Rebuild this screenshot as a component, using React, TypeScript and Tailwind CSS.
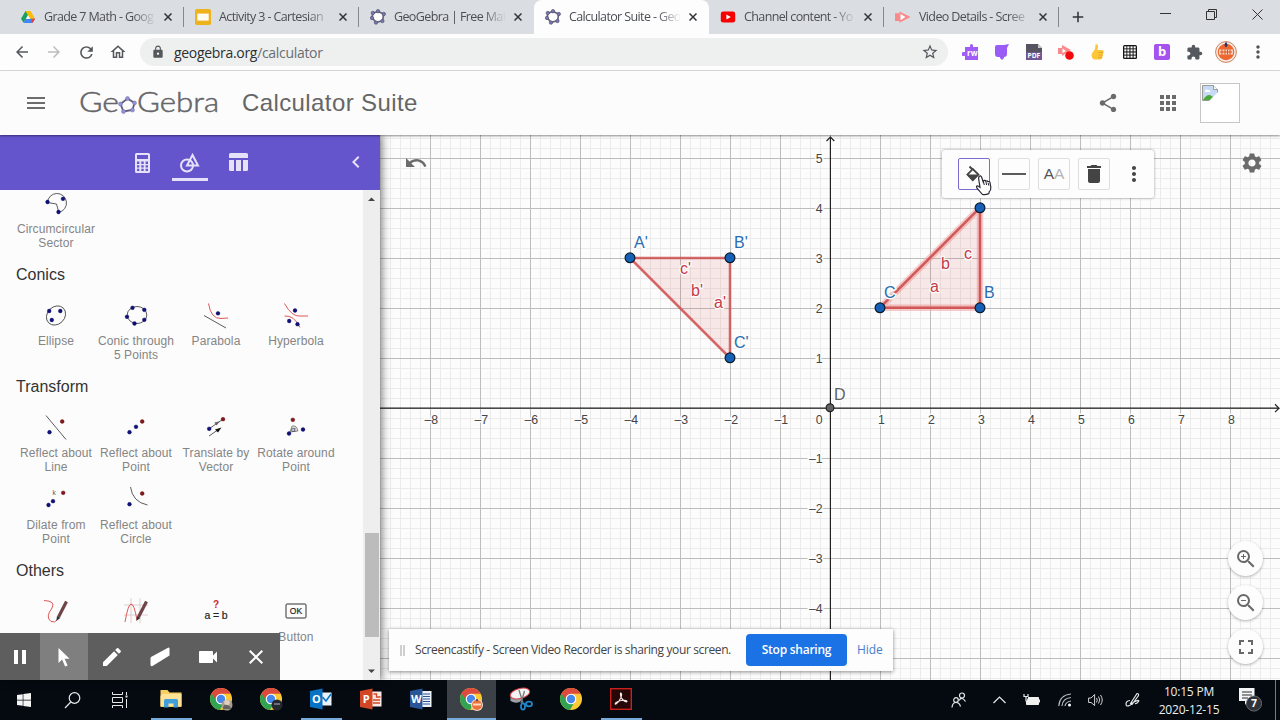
import type { ReactNode } from 'react'
import {
    MdAdd, MdApps, MdArrowBack, MdArrowForward, MdChevronLeft, MdClose, MdDelete, MdExtension,
    MdFullscreen, MdLock, MdMenu, MdModeEdit, MdMoreVert, MdOutlineHome, MdPause,
    MdRefresh, MdSettings, MdShare, MdStarBorder, MdUndo, MdVideocam, MdZoomIn, MdZoomOut,
} from 'react-icons/md'
import { FaWindows } from 'react-icons/fa'

/* ---------- shared icons ---------- */

const GeoIcon = () => (
    <svg className="w-4 h-4" viewBox="0 0 16 16">
        <path d="M8 2.4 13.6 5 12.6 11.8 6 13.4 2 8.6 3 4.2Z" fill="#fff" stroke="#66667c" strokeWidth="1.7" />
        {[[8, 2.2], [13.8, 5], [12.4, 12], [6, 13.6], [2, 9], [2.8, 4]].map(([x, y]) => (
            <circle key={x} cx={x} cy={y} r="1.7" fill="#7876b4" stroke="#55556d" strokeWidth=".7" />
        ))}
    </svg>
)

const DriveIcon = () => (
    <svg className="w-4 h-4" viewBox="0 0 16 16">
        <path d="M5.5 2h5l-3.8 6.4L3.5 13.8 1 9.8Z" fill="#19a15f" />
        <path d="M5.5 2h5L15 9.7h-5Z" fill="#fbbc04" />
        <path d="M5.4 9.7H15l-2.4 4.2h-9Z" fill="#4285f4" />
        <path d="M11 9.7h4l-2.4 4.2Z" fill="#ea4335" />
        <path d="M8 6.2l2 3.5H6Z" fill="#fff" />
    </svg>
)

const SlidesIcon = () => (
    <svg className="w-4 h-4" viewBox="0 0 16 16">
        <rect width="16" height="16" rx="1.8" fill="#edb21c" />
        <rect x="2.3" y="4.6" width="11.4" height="7" fill="#fffdf2" />
    </svg>
)

const YoutubeIcon = () => (
    <svg className="w-4 h-4" viewBox="0 0 16 16">
        <rect x=".8" y="2.6" width="14.4" height="11" rx="2.4" fill="#f80000" />
        <path d="M6.4 5.6v5L10.8 8Z" fill="#fff" />
    </svg>
)

const CastifyIcon = () => (
    <svg className="w-4 h-4" viewBox="0 0 16 16">
        <path d="M0 4.2h4.5V2.4L15.6 8 4.5 13.8V12H0Z" fill="#f98a8c" />
        <path d="M5.5 5l5 3-5 3.2Z" fill="#fff" />
    </svg>
)

const ChromeIcon = ({ children }: { children?: ReactNode }) => (
    <svg className="w-6 h-6" viewBox="0 0 24 24">
        <circle cx="12" cy="12" r="11" fill="#fcc934" />
        <path d="M12 12 2.5 6.5A11 11 0 0 0 11 23l5-9Z" fill="#32a350" />
        <path d="M12 12H6.5L2.5 6.5A11 11 0 0 1 21.6 6.8H12Z" fill="#dd4b3e" />
        <circle cx="12" cy="12" r="5.3" fill="#fff" />
        <circle cx="12" cy="12" r="4.2" fill="#4688ec" />
        {children}
    </svg>
)

/* ---------- browser chrome ---------- */

interface TabProps {
    icon: ReactNode;
    title: string;
    active?: boolean;
    line?: boolean;
}

const Tab = ({ icon, title, active, line }: TabProps) => (
    <div className={`flex items-center w-[175px] h-full pl-[11px] shrink-0 ${active ? 'bg-[#fdfdfd] rounded-t-lg' : ''}`}>
        {icon}
        <div className="w-[111px] ml-2 whitespace-nowrap text-[12.5px] tracking-[-0.62px] text-[#4c4f54] font-['Open_Sans',sans-serif] [mask-image:linear-gradient(to_right,#000_80%,transparent_101%)]">
            {title}
        </div>
        <div className="w-[26px] flex justify-center">
            <svg className="w-2 h-2" viewBox="0 0 8 8"><path d="M.5.5l7 7m0-7l-7 7" stroke="#303338" strokeWidth="1.5" /></svg>
        </div>
        {line && <div className="ml-[2px] w-px h-5 bg-[#85888d]" />}
    </div>
)

const TabStrip = () => (
    <div className="flex items-center h-[34px] pl-[9px] bg-[#dadde2]">
        <Tab icon={<DriveIcon />} title="Grade 7 Math - Goog" line />
        <Tab icon={<SlidesIcon />} title="Activity 3 - Cartesian" line />
        <Tab icon={<GeoIcon />} title="GeoGebra | Free Mat" />
        <Tab icon={<GeoIcon />} title="Calculator Suite - Geo" active />
        <Tab icon={<YoutubeIcon />} title="Channel content - Yo" line />
        <Tab icon={<CastifyIcon />} title="Video Details - Scree" line />
        <MdAdd className="ml-[10px] w-[18px] h-[18px] text-[#2f3337]" />
        <div className="ml-auto flex items-start h-full pt-[9px] pr-[17px] gap-[35px]">
            <svg className="w-[11px] h-[11px]" viewBox="0 0 11 11"><path d="M0 4.5h11" stroke="#333" /></svg>
            <svg className="w-[11px] h-[11px]" viewBox="0 0 11 11">
                <path d="M.5 2.5h8v8h-8ZM2.5 2.5v-2h8v8h-2" fill="none" stroke="#333" />
            </svg>
            <svg className="w-[11px] h-[11px]" viewBox="0 0 11 11"><path d="M.5.5l10 10m0-10l-10 10" stroke="#333" /></svg>
        </div>
    </div>
)

const extensions: ReactNode[] = [
    <svg className="w-4 h-4" viewBox="0 0 16 16">
        <path d="M2 3h6V1.5a1.5 1.5 0 0 1 3 0V3h5v13H3v-4H1.500a1.500 1.500 0 0 1 0-4H3V3Z" fill="#a15cf6" />
        <text x="5" y="12" fontSize="8" fontWeight="700" fill="#fff" fontFamily="Open Sans">rw</text>
    </svg>,
    <svg className="w-4 h-4" viewBox="0 0 16 16">
        <path d="M3 1h7l5-1-2 4v6q0 3-3 3v1l-2 2-2-2v-1H4q-3 0-3-3V3q0-2 2-2Z" fill="#9a5cf7" />
    </svg>,
    <svg className="w-4 h-4" viewBox="0 0 16 16">
        <path d="M0 0h12l4 4v12H0Z" fill="#55535f" />
        <path d="M0 8h16v8H0Z" fill="#6e5794" />
        <path d="M12 0v4h4Z" fill="#c9c9cf" />
        <text x="1.600" y="13.800" fontSize="6.600" fontWeight="700" fill="#fff" fontFamily="Open Sans">PDF</text>
    </svg>,
    <svg className="w-4 h-4" viewBox="0 0 16 16">
        <path d="M0 4h4V1l9 5-9 6v-2H0Z" fill="#f98a8c" />
        <path d="M4.500 4.500 8 7l-3.500 2Z" fill="#fff" />
        <circle cx="11.500" cy="11.500" r="4.300" fill="#f3080c" />
    </svg>,
    <svg className="w-4 h-4" viewBox="0 0 16 16">
        <path d="M5.500.5c2-.8 2.800 1 2.400 3l-.5 2.500h4.800q1.800.4 1.300 2.200l-1.200 5.200Q12 15.500 10 15.500H4Q1.500 14 1.500 11.500 1.500 9 3.300 7.500 5.500 5.500 5.500.5Z" fill="#fbc638" />
        <path d="M8.500 8.500h4.800M8.500 11h4.300M8 13.400h4.200" stroke="#dd9b24" strokeWidth=".7" />
    </svg>,
    <svg className="w-4 h-4" viewBox="0 0 16 16">
        <rect x="1" y="1" width="14" height="14" rx="1.500" fill="#161616" />
        {[2.3, 5.3, 8.5, 11.6].map(x => [2.3, 5.3, 8.5, 11.6].map(y => (
            <rect key={`${x}-${y}`} x={x} y={y} width="2.100" height="2.100" fill="#fff" />
        )))}
    </svg>,
    <div className="w-4 h-4 rounded-[2px] bg-[#a552ef] text-white text-[13px] leading-[15px] font-bold text-center font-['Open_Sans',sans-serif]">b</div>,
    <MdExtension className="w-[17px] h-[17px] text-[#55585c]" />,
    <svg className="w-[22px] h-[22px]" viewBox="0 0 22 22">
        <circle cx="11" cy="11" r="10.400" fill="#f6ede6" stroke="#c0603a" strokeWidth=".8" />
        <circle cx="11" cy="11" r="8.300" fill="#ee6730" />
        <path d="M4 8.500h14v5H4Z" fill="#fbd3bd" />
        <path d="M5 11h12M7 8.500v5M10 8.500v5M12.500 8.500v5M15 8.500v5" stroke="#d9531f" strokeWidth="1" />
        <path d="M11 .8q3 4 0 5.500-3-1.500 0-5.500Z" fill="#27376b" />
    </svg>,
    <MdMoreVert className="w-5 h-5 text-[#505357]" />,
]

const AddressBar = () => (
    <div className="flex items-center h-[37px] pl-1.5 bg-[#fdfdfd] border-b border-[#dcdcdc]">
        {[
            <MdArrowBack className="w-[18px] h-[18px] text-[#54575b]" />,
            <MdArrowForward className="w-[18px] h-[18px] text-[#bdbdbe]" />,
            <MdRefresh className="w-[19px] h-[19px] text-[#54575b]" />,
            <MdOutlineHome className="w-[18px] h-[18px] text-[#54575b]" />,
        ].map((icon, i) => <div key={i} className="w-8 flex justify-center">{icon}</div>)}
        <div className="flex items-center ml-[6px] w-[808px] h-7 rounded-full bg-[#eef0f0] pl-[11px] pr-[9px]">
            <MdLock className="w-[14px] h-[14px] text-[#54575b]" />
            <div className="ml-[9px] text-[14px] tracking-[-0.31px] text-[#696d71] font-['Open_Sans',sans-serif]">
                <span className="text-[#2c2e31]">geogebra.org</span>/calculator
            </div>
            <MdStarBorder className="ml-auto w-[18px] h-[18px] text-[#54575b]" />
        </div>
        <div className="flex ml-[6px]">
            {extensions.map((icon, i) => <div key={i} className="w-8 h-8 flex items-center justify-center">{icon}</div>)}
        </div>
    </div>
)

const AppHeader = () => (
    <div className="relative z-10 flex items-center h-16 bg-[#fcfcfc] shadow-[0_1px_2px_rgba(0,0,0,0.45)]">
        <MdMenu className="ml-6 w-6 h-6 text-[#6d6d6d]" />
        <svg className="ml-8 w-[140px] h-8" viewBox="0 0 140 32">
            <g fill="#66666a" fontFamily="Lato" fontSize="26.500" fontWeight="300" stroke="#66666a" strokeWidth=".5">
                <text x="-1" y="25" textLength="40" lengthAdjust="spacingAndGlyphs">Ge</text>
                <text x="57" y="25" textLength="82" lengthAdjust="spacingAndGlyphs">Gebra</text>
            </g>
            <path d="M47.500 11.500 54.500 16 52.500 23 43.500 24.500 40.500 17Z" fill="none" stroke="#5c5c78" strokeWidth="1.800" />
            {[[47.5, 11.5], [54.5, 16], [52.5, 23], [43.5, 24.5], [40.5, 17]].map(([x, y]) => (
                <circle key={x} cx={x} cy={y} r="2" fill="#9390e0" stroke="#706ea0" strokeWidth=".5" />
            ))}
        </svg>
        <div className="ml-[22px] text-2xl tracking-[0.4px] text-[#666]">Calculator Suite</div>
        <div className="ml-auto flex items-center pr-10">
            <MdShare className="w-[22px] h-[22px] text-[#6b6b6b]" />
            <MdApps className="ml-[37px] w-6 h-6 text-[#6b6b6b]" />
            <div className="ml-5 -mt-px w-10 h-10 border border-[#c6c6c6] bg-white p-px">
                <svg className="w-4 h-4" viewBox="0 0 16 16">
                    <path d="M.5.5h11l4 4v11H.500Z" fill="#c7daf4" stroke="#9a9a9a" />
                    <path d="M1 15q5-8 10-3l-2 3Z" fill="#4caa38" />
                    <path d="M3 6q1-3 3-1 3 0 2 2H3Z" fill="#fff" />
                    <path d="M16 7 7 16h9Z" fill="#fff" />
                    <path d="M11.500.5v4h4" fill="#fff" stroke="#9a9a9a" />
                </svg>
            </div>
        </div>
    </div>
)

/* ---------- tools panel ---------- */

const Dot = ({ x, y, red }: { x: number; y: number; red?: boolean }) => (
    <circle cx={x} cy={y} r="1.900" fill={red ? '#8c1418' : '#10107c'} stroke={red ? '#4d0b0e' : '#06065a'} strokeWidth=".4" />
)

const toolLine = { fill: 'none', stroke: '#4a4a4a', strokeWidth: 0.9 }
const redLine = { fill: 'none', stroke: '#dc4545', strokeWidth: 0.9 }

interface Tool {
    label: string;
    art: ReactNode;
}

// every drawing sits in a 32x32 box
const circumSector: Tool = {
    label: 'Circumcircular Sector',
    art: <><path d="M7.500 15.500A9.500 9.500 0 1 1 18.800 25.300L16.500 17Z" {...toolLine} /><Dot x={7.5} y={15} /><Dot x={23} y={11.8} /><Dot x={18.5} y={25} /></>,
}

const conics: Tool[] = [
    { label: 'Ellipse', art: <><ellipse cx="16" cy="16.500" rx="10.400" ry="8.700" transform="rotate(-45 16 16.500)" {...toolLine} /><Dot x={9.2} y={12} /><Dot x={20.3} y={12} /><Dot x={11.8} y={21} /></> },
    { label: 'Conic through 5 Points', art: <><ellipse cx="17" cy="16" rx="9.800" ry="8.500" {...toolLine} /><Dot x={12.5} y={8.8} /><Dot x={24.3} y={10.8} /><Dot x={7} y={17.8} /><Dot x={24.3} y={20.8} /><Dot x={14.5} y={24.5} /></> },
    { label: 'Parabola', art: <><path d="M8.500 4.500Q11 20 21 19.500L28 19" {...redLine} /><path d="M4 16.500 26 29" {...toolLine} /><Dot x={18} y={14.3} /></> },
    { label: 'Hyperbola', art: <><path d="M4.500 4.500Q12 18 20 17L28 17M4.500 17Q14 16 20 28.500" {...redLine} /><Dot x={15} y={11.5} /><Dot x={9.2} y={22} /><Dot x={17.5} y={25.2} /></> },
]

const transforms: Tool[] = [
    { label: 'Reflect about Line', art: <><path d="M6 4.500 26 28.500" {...toolLine} /><Dot x={22.2} y={10.5} red /><Dot x={9.5} y={21.2} /></> },
    { label: 'Reflect about Point', art: <><Dot x={22.2} y={10.5} red /><Dot x={16} y={15.8} /><Dot x={9.5} y={21.2} /></> },
    { label: 'Translate by Vector', art: <><path d="M9.500 17.500 22.500 8.500M9 25l8-5.500" {...toolLine} /><path d="M20 10.200l-3.500 4.200-2.200-2.800Z" fill="#666" /><path d="M21.500 16.500l-3.500 5-3-3Z" fill="#111" /><Dot x={23} y={8.2} red /><Dot x={9.2} y={17.8} /></> },
    { label: 'Rotate around Point', art: <><path d="M10 21 12 15q5-1 6 5Z" fill="#d6d6d6" stroke="#777" strokeWidth=".8" /><text x="11" y="20.500" fontSize="8" fill="#444">α</text><Dot x={12.8} y={8.8} red /><Dot x={9} y={22.5} /><Dot x={23} y={18.5} /></> },
    { label: 'Dilate from Point', art: <><text x="12.500" y="12" fontSize="6.500" fill="#555">k</text><Dot x={23.2} y={9.8} red /><Dot x={13} y={18.2} /><Dot x={8.5} y={22} /></> },
    { label: 'Reflect about Circle', art: <><path d="M10.500 4Q12.500 19 27.500 22" {...toolLine} /><Dot x={22.2} y={10.5} red /><Dot x={9.5} y={21.2} /></> },
]

const pencil = <><path d="M26.500 6.500 18.500 22" stroke="#6f4447" strokeWidth="3.200" /><path d="M17 21l-.7 5 4-3Z" fill="#333" /></>

// the recorder bar covers the names of the first three
const others: Tool[] = [
    { label: '', art: <><path d="M4 5.500Q16 6 12 13 5 22 11 26.500 15 28 17 25" {...redLine} />{pencil}</> },
    { label: '', art: <><path d="M11 3v25M20 3v25M4 10h24M4 20h24" stroke="#d8c4c4" strokeWidth=".8" /><path d="M5 27Q11-8 17 25" {...redLine} />{pencil}</> },
    { label: '', art: <><text x="16" y="13" fontSize="10" fontWeight="700" textAnchor="middle" fill="#d02a2a">?</text><text x="16" y="24" fontSize="10.500" textAnchor="middle" textLength="23" fill="#222" stroke="#222" strokeWidth=".2">a = b</text></> },
    { label: 'Button', art: <><rect x="6" y="9" width="20" height="14" rx="1" fill="none" stroke="#333" /><text x="16" y="19" fontSize="8.500" textAnchor="middle" fill="#222" stroke="#222" strokeWidth=".2">OK</text></> },
]

const ToolRow = ({ tools }: { tools: Tool[] }) => (
    <div className="grid grid-cols-[repeat(4,80px)]">
        {tools.map((tool, i) => (
            <div key={i} className="flex flex-col items-center h-[72px]">
                <div className="h-10 flex items-center pt-px">
                    <svg className="w-8 h-8 overflow-visible" viewBox="0 0 32 32">{tool.art}</svg>
                </div>
                <div className="w-20 text-center text-xs leading-[14px] tracking-[0.1px] text-[#858585]">{tool.label}</div>
            </div>
        ))}
    </div>
)

const SectionTitle = ({ children }: { children: ReactNode }) => (
    <div className="h-10 leading-[42px] text-base text-[#333]">{children}</div>
)

const ToolsPanel = () => (
    <div className="relative z-[5] flex flex-col w-[380px] h-full bg-[#fcfcfc] shadow-[2px_0_8px_rgba(0,0,0,0.5)]">
        <div className="flex h-[55px] bg-[#6455cd] shrink-0">
            <div className="flex ml-[118px]">
                <div className="w-12 h-full flex justify-center pt-[18px]">
                    <svg className="w-[15px] h-5" viewBox="0 0 15 20">
                        <path fillRule="evenodd" fill="#e5e1f8" d="M1.500 0h12Q15 0 15 1.500v17q0 1.500-1.500 1.500h-12Q0 20 0 18.500v-17Q0 0 1.500 0ZM2 2v4h11V2ZM2 8.500V11h2.300V8.500Zm4.300 0V11h2.400V8.500Zm4.300 0V11H13V8.500ZM2 12.200v2.300h2.300v-2.300Zm4.300 0v2.300h2.400v-2.300Zm4.300 0v2.300H13v-2.300ZM2 15.800V18h2.300v-2.200Zm4.300 0V18h2.400v-2.200Zm4.300 0V18H13v-2.200Z" />
                    </svg>
                </div>
                <div className="w-12 h-full flex flex-col items-center pt-[18px]">
                    <svg className="w-5 h-5" viewBox="0 0 20 20">
                        <g fill="none" stroke="#e5e1f8" strokeWidth="2">
                            <circle cx="7" cy="12.500" r="6" />
                            <path d="M12.500 2 18 12.500H7Z" />
                        </g>
                    </svg>
                    <div className="mt-[5px] w-9 h-[3px] bg-[#e5e1f8]" />
                </div>
                <div className="w-[49px] h-full flex justify-center pt-[17px]">
                    <svg className="w-[19px] h-5" viewBox="0 0 19 20">
                        <path fill="#e5e1f8" d="M1.500 1h16Q19 1 19 2.500V6H0V2.500Q0 1 1.500 1ZM0 8h5v11H1.500Q0 19 0 17.500ZM7 8h5v11H7ZM14 8h5v9.500q0 1.500-1.500 1.500H14Z" />
                    </svg>
                </div>
            </div>
            <MdChevronLeft className="ml-auto mr-3 mt-[15px] w-6 h-6 text-[#e5e1f8]" />
        </div>
        <div className="flex flex-1 min-h-0">
            <div className="flex-1 overflow-hidden pl-4">
                <div className="-mt-2">
                    <ToolRow tools={[circumSector]} />
                    <SectionTitle>Conics</SectionTitle>
                    <ToolRow tools={conics} />
                    <SectionTitle>Transform</SectionTitle>
                    <ToolRow tools={transforms} />
                    <SectionTitle>Others</SectionTitle>
                    <ToolRow tools={others} />
                </div>
            </div>
            <div className="flex flex-col items-center w-[17px] bg-[#eeeeee] pt-[7px] pb-[5px]">
                <svg className="w-[7px] h-4" viewBox="0 0 7 16"><path d="M0 4 3.500.5 7 4Z" fill="#444" /></svg>
                <div className="flex-1 flex flex-col justify-end w-full pl-[2px] pr-px">
                    <div className="h-[104px] mb-[29px] bg-[#bcbcbc]" />
                </div>
                <svg className="w-[7px] h-[9px]" viewBox="0 0 7 9"><path d="M0 3.500 3.500 7 7 3.500Z" fill="#444" /></svg>
            </div>
        </div>
    </div>
)

/* ---------- graphics view ---------- */

const OX = 830.5
const OY = 408.5
const UNIT = 50

const range = (from: number, to: number) => Array.from({ length: to - from + 1 }, (_, i) => from + i)

const points = [
    { x: 630, y: 258, label: "A'" },
    { x: 730, y: 258, label: "B'" },
    { x: 730, y: 358, label: "C'" },
    { x: 980, y: 208, label: '' },
    { x: 980, y: 308, label: 'B' },
    { x: 880, y: 308, label: 'C' },
]

const sides = [
    { x: 680, y: 274, label: "c'" },
    { x: 691, y: 296, label: "b'" },
    { x: 714, y: 308, label: "a'" },
    { x: 964, y: 258.5, label: 'c' },
    { x: 941, y: 269, label: 'b' },
    { x: 930, y: 292, label: 'a' },
]

const halo = { stroke: '#fcfcfc', strokeWidth: 3, paintOrder: 'stroke' as const }

const Graph = () => (
    <svg className="w-[900px] h-[545px]" viewBox="380 135 900 545" fontFamily="Liberation Sans, sans-serif">
        <rect x="380" y="135" width="900" height="545" fill="#fcfcfc" />
        <g stroke="#ebebeb">
            {range(-45, 45).map(i => <path key={`v${i}`} d={`M${OX + i * 10} 135V680`} />)}
            {range(-27, 27).map(i => <path key={`h${i}`} d={`M380 ${OY + i * 10}H1280`} />)}
        </g>
        <g stroke="#bdbdbd">
            {range(-8, 8).map(i => <path key={`v${i}`} d={`M${OX + i * UNIT} 135V680`} />)}
            {range(-5, 5).map(i => <path key={`h${i}`} d={`M380 ${OY + i * UNIT}H1280`} />)}
        </g>
        <g fill="none" stroke="#222" strokeWidth="1.200">
            <path d="M380 408.200H1279M830.400 137V680" />
            <path d="M826.500 141l3.900-4 3.900 4M1275 404.300l4 3.900-4 3.900" />
        </g>

        <g fill="#444" fontSize="12.300" {...halo}>
            {range(-8, 8).filter(i => i !== 0).map(i => (
                <text key={i} x={OX + i * UNIT + 0.8} y="424.300" textAnchor="middle">{i < 0 ? `–${-i}` : i}</text>
            ))}
            {range(-4, 5).filter(i => i !== 0).map(i => (
                <text key={i} x="822.600" y={OY - i * UNIT + 4.3} textAnchor="end">{i < 0 ? `–${-i}` : i}</text>
            ))}
            <text x="822.500" y="424.300" textAnchor="end">0</text>
        </g>

        <g strokeLinejoin="round">
            <path d="M630 258H730V358Z" fill="#d32f2f" fillOpacity=".1" stroke="#cf4f4f" strokeOpacity=".85" strokeWidth="2.500" />
            <path d="M980 207.700V307.700H880Z" fill="none" stroke="#f0a0a0" strokeOpacity=".55" strokeWidth="6.500" />
            <path d="M980 207.700V307.700H880Z" fill="#d32f2f" fillOpacity=".1" stroke="#cc4c4c" strokeOpacity=".9" strokeWidth="2.500" />
        </g>
        <g fontSize="16" fill="#c43a46" {...halo} strokeWidth="2.500">
            {sides.map(s => <text key={s.label} x={s.x} y={s.y}>{s.label}</text>)}
        </g>
        <g fontSize="16" fill="#2a6cb0" {...halo}>
            {points.filter(p => p.label).map(p => <text key={p.label} x={p.x + 4} y={p.y - 10}>{p.label}</text>)}
            <text x="834" y="400" fill="#616161">D</text>
        </g>
        {points.map(p => (
            <circle key={p.x + p.label} cx={p.x} cy={p.y - 0.2} r="4.900" fill="#1561b8" stroke="#0c1c2c" strokeWidth="1.200" />
        ))}
        <circle cx="830" cy="407.800" r="3.900" fill="#616161" stroke="#222" strokeWidth="1.200" />
    </svg>
)

const StyleBar = () => (
    <div className="absolute left-[562px] top-[15px] flex items-center w-[212px] h-12 pl-4 gap-2 rounded-[3px] bg-[#fdfdfd] shadow-[0_0_3px_rgba(0,0,0,0.4)]">
        <div className="w-8 h-8 flex items-center justify-center border border-[#7c6cd0] rounded-[2px]">
            <svg className="w-[18px] h-[18px]" viewBox="0 0 18 18">
                <path d="M4.500 1.500 8 5" stroke="#444" strokeWidth="2" />
                <path d="M7.800 4 2.400 9.600l5.400 5.600 5.600-5.600Z" fill="#fff" stroke="#444" strokeWidth="1.800" />
                <path d="M1.800 9.500h12.200L7.800 16Z" fill="#444" />
            </svg>
        </div>
        <div className="w-8 h-8 flex items-center justify-center border border-[#dedede] rounded-[2px]">
            <div className="w-6 h-[2px] bg-[#5c5c5c]" />
        </div>
        <div className="w-8 h-8 flex items-center justify-center border border-[#dedede] rounded-[2px] text-[15.5px] text-[#555]">
            A<span className="text-[#b4b4b4]">A</span>
        </div>
        <div className="w-8 h-8 flex items-center justify-center border border-[#dedede] rounded-[2px]">
            <MdDelete className="w-6 h-6 text-[#444]" />
        </div>
        <div className="w-8 h-8 flex items-center justify-center">
            <MdMoreVert className="w-6 h-6 text-[#444]" />
        </div>
        {/* mouse pointer */}
        <svg className="absolute left-[31px] top-[24px] w-[20px] h-[22px]" viewBox="0 0 20 22">
            <path d="M6 2.500q1.500-1.500 2.600.5l1.600 5 .6-1.400q1.500-.6 2 .6 1.400-.8 2.200.5 1.600-.7 2 .9l.8 4.500q.3 3-1.500 4.500l-.5 2q-3.500 1.500-6.500.7L4.200 14.500q-1.800-3 .8-2.500l2 1.200L5.600 4.500Z" fill="#fff" stroke="#2a2a35" strokeWidth="1.200" />
            <path d="M10.500 8l.8 3M13 8l.6 3M15.200 9l.5 2.500" stroke="#2a2a35" />
        </svg>
    </div>
)

const RoundButton = ({ children }: { children: ReactNode }) => (
    <div className="w-[35px] h-[35px] rounded-full bg-[#fdfdfd] flex items-center justify-center text-[#696969] shadow-[0_1px_3px_rgba(0,0,0,0.3)]">
        {children}
    </div>
)

const SharingBar = () => (
    <div className="absolute left-[389px] top-[494px] z-20 flex items-center w-[504px] h-[42px] bg-[#fdfdfd] shadow-[0_1px_4px_rgba(0,0,0,0.45)] text-xs font-['Open_Sans',sans-serif] whitespace-nowrap">
        <div className="ml-[11px] w-[5px] h-[11px] border-x-2 border-[#cfcfcf]" />
        <div className="ml-[10px] w-[331px] tracking-[-0.38px] text-[#444]">
            Screencastify - Screen Video Recorder is sharing your screen.
        </div>
        <div className="w-[101px] h-8 rounded-[4px] bg-[#1b72e4] text-white font-semibold tracking-[-0.25px] flex items-center justify-center">
            Stop sharing
        </div>
        <div className="ml-[10px] text-[#457fce] tracking-[-0.1px]">Hide</div>
    </div>
)

const RecorderBar = () => (
    <div className="absolute left-0 top-[498px] z-20 flex w-[280px] h-[47px] bg-[#5e5e5e] text-white">
        <div className="w-10 flex items-center justify-center"><MdPause className="w-[24px] h-[24px]" /></div>
        <div className="w-12 flex items-center justify-center bg-[#7f7f7f]">
            <svg className="w-3 h-5" viewBox="0 0 12 20"><path d="M.500 1v15l3.600-3.500 3 7 2.500-1-3-6.800h5Z" fill="#fff" /></svg>
        </div>
        <div className="w-12 flex items-center justify-center"><MdModeEdit className="w-6 h-6" /></div>
        <div className="w-12 flex items-center justify-center">
            <svg className="w-5 h-5" viewBox="0 0 20 20"><path d="M1 10 18.500.5q1 0 1 1v7L2.500 19q-2 .5-2-1v-7Z" fill="#fff" /></svg>
        </div>
        <div className="w-12 flex items-center justify-center"><MdVideocam className="w-6 h-6" /></div>
        <div className="w-12 flex items-center justify-center"><MdClose className="w-6 h-6" /></div>
    </div>
)

/* ---------- windows taskbar ---------- */

const OfficeIcon = ({ letter, fill, children }: { letter: string; fill: string; children: ReactNode }) => (
    <svg className="w-[22px] h-[22px]" viewBox="0 0 22 22">
        {children}
        <path d="M0 3 12.500.5v21L0 19Z" fill={fill} />
        <text x="6.300" y="15" fontSize="11" fontWeight="700" textAnchor="middle" fill="#fff" fontFamily="Open Sans">{letter}</text>
    </svg>
)

const apps: { icon: ReactNode; open?: boolean; active?: boolean }[] = [
    {
        open: true,
        icon: (
            <svg className="w-[22px] h-5" viewBox="0 0 22 20">
                <path d="M.5 1h7l2 2.500H21.500V18H.500Z" fill="#f5cd62" />
                <path d="M2 5h19.500v12H.500V7Z" fill="#fbe296" />
                <path d="M4 18.500v-7q0-1.500 1.500-1.500h11q1.500 0 1.500 1.500v7h-4.500v-4h-5v4Z" fill="#3e9fda" />
            </svg>
        ),
    },
    { icon: <ChromeIcon><circle cx="18" cy="18" r="5.500" fill="#a99d90" /><circle cx="18" cy="15.500" r="2.800" fill="#e0cdbb" /><path d="M14 22q0-5 4-4t4 4Z" fill="#666260" /></ChromeIcon> },
    { icon: <ChromeIcon><circle cx="18" cy="18" r="5.500" fill="#25282d" /><path d="M15 17h6" stroke="#8a8394" strokeWidth="1.500" /></ChromeIcon> },
    { open: true, icon: <OfficeIcon letter="O" fill="#0873c4"><path d="M11 4.500h10.500v13H11Z" fill="#e7f1fa" /><path d="M12.500 9l3.500 4 5-7" fill="none" stroke="#0873c4" strokeWidth="1.500" /></OfficeIcon> },
    { icon: <OfficeIcon letter="P" fill="#d24625"><path d="M11 3.500h10.500v15H11Z" fill="#f9e9e4" /><path d="M13.500 6h3v3h4M13 12h7M13 15h7" fill="none" stroke="#d24625" strokeWidth="1.300" /></OfficeIcon> },
    { icon: <OfficeIcon letter="W" fill="#2a5699"><path d="M11 3h10.500v16H11Z" fill="#eef3fa" /><path d="M13 6h7M13 8.500h7M13 11h7M13 13.500h7M13 16h7" stroke="#2a5699" /></OfficeIcon> },
    { open: true, active: true, icon: <ChromeIcon><circle cx="18" cy="18" r="6" fill="#f1ddd0" /><circle cx="18" cy="18" r="5" fill="#ec7138" /><path d="M14 17.500h8" stroke="#ffd9c4" strokeWidth="2" /><circle cx="18" cy="13" r="1" fill="#27376b" /></ChromeIcon> },
    {
        icon: (
            <svg className="w-6 h-6" viewBox="0 0 24 24">
                <path d="M1.500 8v6q5 3 9 1l5-5Z" fill="#9ba1a8" />
                <ellipse cx="11" cy="6.500" rx="10" ry="5" transform="rotate(-14 11 6.500)" fill="#f3f3f3" stroke="#d63d45" />
                <path d="M10 3l4 13M15.500 4l-3.500 12" stroke="#777" strokeWidth="1.300" />
                <g fill="none" stroke="#2386c8" strokeWidth="1.800">
                    <ellipse cx="14" cy="19.500" rx="2" ry="3.200" />
                    <ellipse cx="20" cy="17" rx="3" ry="2.300" />
                </g>
            </svg>
        ),
    },
    { icon: <ChromeIcon /> },
    {
        open: true,
        icon: (
            <svg className="w-[22px] h-[22px]" viewBox="0 0 22 22">
                <rect x=".700" y=".700" width="20.600" height="20.600" fill="#260606" stroke="#c9201c" strokeWidth="1.400" />
                <path d="M10.500 5q2 0 .5 4.500Q9 14 6 16q-1.500.5-.5-1 2-2 6-2.500 5-.5 5.500.8-.5 1.500-4-1.300-3-3-2.500-7Z" fill="none" stroke="#f2e6e6" strokeWidth="1.100" />
            </svg>
        ),
    },
]

const trayLine = { fill: 'none', stroke: '#e6e8ea', strokeWidth: 1.2 }

const Taskbar = () => (
    <div className="flex h-10 bg-[#040a10] text-white">
        <div className="w-12 flex items-center justify-center"><FaWindows className="w-4 h-4 text-[#f4f4f4]" /></div>
        <div className="w-12 flex items-center justify-center">
            <svg className="w-[17px] h-[17px]" viewBox="0 0 17 17"><circle cx="10.500" cy="6" r="5.300" {...trayLine} /><path d="M6.800 10 1 16" {...trayLine} /></svg>
        </div>
        <div className="w-12 flex items-center justify-center">
            <svg className="w-4 h-4" viewBox="0 0 16 16">
                <path d="M.5 0v2.500h10V0M.5 5.500h10v5H.500ZM.500 16v-2.500h10V16M14.500 0v3M14.500 7v9" {...trayLine} strokeWidth="1" />
                <path d="M13.500 3.500h2v2h-2Z" fill="#e6e8ea" />
            </svg>
        </div>
        <div className="flex ml-[2px]">
            {apps.map((app, i) => (
                <div key={i} className="w-[50px] flex justify-center">
                    <div className={`flex flex-col items-center ${app.active ? 'w-[49px] bg-[#3b4147]' : 'w-[41px]'}`}>
                        <div className="flex-1 flex items-center">{app.icon}</div>
                        <div className={`w-full h-[2px] ${app.open ? 'bg-[#76abdc]' : ''}`} />
                    </div>
                </div>
            ))}
        </div>
        <div className="ml-auto flex items-center">
            <svg className="w-4 h-4" viewBox="0 0 16 16">
                <circle cx="11" cy="3.500" r="2.500" {...trayLine} /><circle cx="5" cy="8" r="2.300" {...trayLine} />
                <path d="M8 8.500q3-4.500 6.500 1M1 15.500q.5-5 4-5t4.500 4" {...trayLine} />
            </svg>
            <svg className="ml-[26px] w-[13px] h-2" viewBox="0 0 13 8"><path d="M.5 7 6.500 1l6 6" {...trayLine} /></svg>
            <svg className="ml-[17px] w-[17px] h-4" viewBox="0 0 17 16">
                <path d="M5 5.500h10.500v7H3.500V9" fill="#f0f0f0" stroke="#f0f0f0" /><path d="M1 2v2.500h4V2M3 5v4.500M16.500 7.500v3" {...trayLine} />
            </svg>
            <svg className="ml-[18px] w-[14px] h-[14px]" viewBox="0 0 14 14">
                <path d="M.8 13Q1.500 2 13 1M4 13Q4.500 5.500 13 4.500M7 13Q7.500 9 13 8" {...trayLine} stroke="#b8bbbf" /><circle cx="11.500" cy="12" r="1.500" fill="#fff" />
            </svg>
            <svg className="ml-[16px] w-[15px] h-[14px]" viewBox="0 0 15 14">
                <path d="M.6 5h2.500l3.500-3.500v11L3.100 9.500H.600ZM8.500 5q1.500 2 0 4.500M10.500 3.500q2.500 3.500 0 7M12.500 2q3.500 5 0 10" {...trayLine} strokeWidth=".9" />
            </svg>
            <svg className="ml-[22px] w-[15px] h-4" viewBox="0 0 15 16">
                <path d="M5.500 11.500 12 1.500q2 0 1.500 2L7 12.500ZM9 10q6-3 4.500-.5T10 11.500M5 8.500Q1 9 1 12t3.500 1.500 2-4.500" {...trayLine} />
            </svg>
            <div className="ml-[17px] w-[64px] text-center text-xs leading-[18px] pt-px whitespace-nowrap tracking-[-0.2px] text-[#eceef0] font-['Open_Sans',sans-serif]">
                <div>10:15 PM</div>
                <div>2020-12-15</div>
            </div>
            <svg className="ml-[17px] w-6 h-6" viewBox="0 0 24 24">
                <path d="M1 0h15.500v13H10l-3 4v-4H1Z" fill="#f5f5f5" />
                <path d="M4 4h10M4 7h10M4 10h6" stroke="#28313a" strokeWidth="1.100" />
                <circle cx="16" cy="15.500" r="7.600" fill="#30343a" stroke="#777c80" strokeWidth=".8" />
                <text x="16" y="19.300" fontSize="10.500" fontWeight="700" textAnchor="middle" fill="#fff" fontFamily="Open Sans">7</text>
            </svg>
            <div className="ml-[13px] mr-1 w-px h-10 bg-[#777b80]" />
        </div>
    </div>
)

export default function App() {
    return (
        <div className="w-[1280px] h-[720px] flex flex-col overflow-hidden bg-[#fcfcfc] font-['Liberation_Sans',Arial,sans-serif]">
            <TabStrip />
            <AddressBar />
            <AppHeader />
            <div className="relative flex h-[545px]">
                <ToolsPanel />
                <div className="relative w-[900px]">
                    <Graph />
                    <MdUndo className="absolute left-6 top-4 w-6 h-6 text-[#6b6b6b]" />
                    <MdSettings className="absolute left-[860px] top-4 w-6 h-6 text-[#6b6b6b]" />
                    <StyleBar />
                    <div className="absolute left-[848px] top-[406px] flex flex-col gap-[9px]">
                        <RoundButton><MdZoomIn className="w-6 h-6" /></RoundButton>
                        <RoundButton><MdZoomOut className="w-6 h-6" /></RoundButton>
                        <RoundButton><MdFullscreen className="w-6 h-6" /></RoundButton>
                    </div>
                </div>
                <RecorderBar />
                <SharingBar />
            </div>
            <Taskbar />
        </div>
    )
}
